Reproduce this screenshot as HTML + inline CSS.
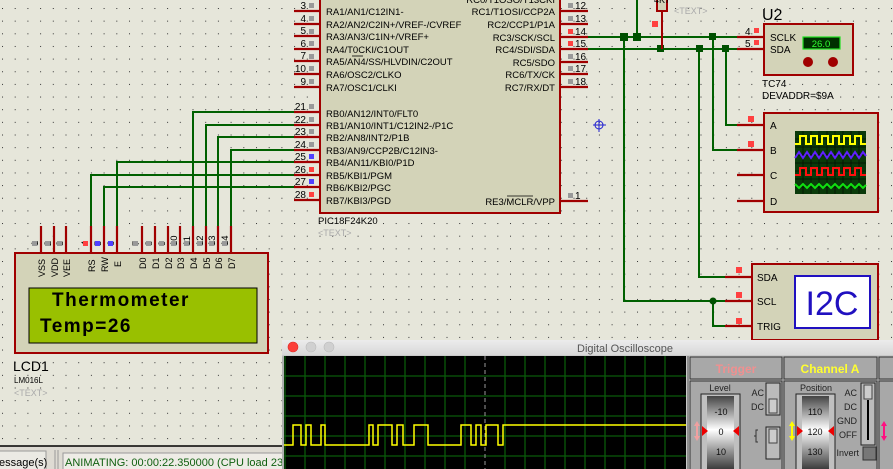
<!DOCTYPE html>
<html><head><meta charset="utf-8"><style>
html,body{margin:0;padding:0;width:893px;height:469px;overflow:hidden;background:#e6e6da}
svg{display:block}
text{font-family:"Liberation Sans",sans-serif}
</style></head><body>
<svg width="893" height="469" viewBox="0 0 893 469" xmlns="http://www.w3.org/2000/svg">
<defs>
<pattern id="dots" x="2" y="8" width="12.7" height="12.65" patternUnits="userSpaceOnUse"><rect x="0" y="0" width="1" height="1" fill="#333"/></pattern>
<linearGradient id="knob" x1="0" x2="0" y1="0" y2="1"><stop offset="0" stop-color="#444"/><stop offset="0.45" stop-color="#fff"/><stop offset="1" stop-color="#333"/></linearGradient>
<linearGradient id="title" x1="0" x2="0" y1="0" y2="1"><stop offset="0" stop-color="#ececec"/><stop offset="1" stop-color="#d6d6d6"/></linearGradient>
</defs>
<rect width="893" height="469" fill="#e6e6da"/>
<rect width="893" height="469" fill="url(#dots)"/>

<!-- PIC chip -->
<rect x="320" y="-5" width="240" height="218" fill="#d3d3b8" stroke="#a00000" stroke-width="2"/>
<g stroke="#a00000" stroke-width="2.2">
<line x1="294" y1="11" x2="320" y2="11"/><line x1="294" y1="24" x2="320" y2="24"/><line x1="294" y1="36" x2="320" y2="36"/><line x1="294" y1="49" x2="320" y2="49"/><line x1="294" y1="61" x2="320" y2="61"/><line x1="294" y1="74" x2="320" y2="74"/><line x1="294" y1="87" x2="320" y2="87"/>
<line x1="294" y1="112" x2="320" y2="112"/><line x1="294" y1="125" x2="320" y2="125"/><line x1="294" y1="137" x2="320" y2="137"/><line x1="294" y1="150" x2="320" y2="150"/><line x1="294" y1="162" x2="320" y2="162"/><line x1="294" y1="175" x2="320" y2="175"/><line x1="294" y1="187" x2="320" y2="187"/><line x1="294" y1="200" x2="320" y2="200"/>
<line x1="561" y1="11" x2="588" y2="11"/><line x1="561" y1="24" x2="588" y2="24"/><line x1="561" y1="37" x2="588" y2="37"/><line x1="561" y1="49" x2="588" y2="49"/><line x1="561" y1="62" x2="588" y2="62"/><line x1="561" y1="74" x2="588" y2="74"/><line x1="561" y1="87" x2="588" y2="87"/><line x1="561" y1="201" x2="588" y2="201"/>
</g>
<g font-size="10" fill="#000" text-anchor="end">
<text x="306" y="9">3</text><text x="306" y="22">4</text><text x="306" y="34">5</text><text x="306" y="47">6</text><text x="306" y="59">7</text><text x="306" y="72">10</text><text x="306" y="85">9</text>
<text x="306" y="110">21</text><text x="306" y="123">22</text><text x="306" y="135">23</text><text x="306" y="148">24</text><text x="306" y="160">25</text><text x="306" y="173">26</text><text x="306" y="185">27</text><text x="306" y="198">28</text>
</g>
<g fill="#999">
<rect x="309" y="3" width="5" height="5"/><rect x="309" y="16" width="5" height="5"/><rect x="309" y="29" width="5" height="5"/><rect x="309" y="41" width="5" height="5"/><rect x="309" y="54" width="5" height="5"/><rect x="309" y="66" width="5" height="5"/><rect x="309" y="79" width="5" height="5"/>
<rect x="309" y="104" width="5" height="5"/><rect x="309" y="117" width="5" height="5"/><rect x="309" y="129" width="5" height="5"/><rect x="309" y="142" width="5" height="5"/>
<rect x="568" y="3" width="5" height="5"/><rect x="568" y="16" width="5" height="5"/><rect x="568" y="54" width="5" height="5"/><rect x="568" y="66" width="5" height="5"/><rect x="568" y="79" width="5" height="5"/><rect x="568" y="193" width="5" height="5"/>
</g>
<rect x="309" y="154" width="5" height="5" fill="#5040ff"/><rect x="309" y="179" width="5" height="5" fill="#5040ff"/>
<rect x="309" y="167" width="5" height="5" fill="#ff4040"/><rect x="309" y="192" width="5" height="5" fill="#ff4040"/>
<rect x="568" y="29" width="5" height="5" fill="#ff4040"/><rect x="568" y="41" width="5" height="5" fill="#ff4040"/>
<g font-size="10" fill="#000" text-anchor="start">
<text x="575" y="9">12</text><text x="575" y="22">13</text><text x="575" y="35">14</text><text x="575" y="47">15</text><text x="575" y="60">16</text><text x="575" y="72">17</text><text x="575" y="85">18</text><text x="575" y="199">1</text>
</g>
<g font-size="9.5" fill="#000">
<text x="326" y="15">RA1/AN1/C12IN1-</text><text x="326" y="28">RA2/AN2/C2IN+/VREF-/CVREF</text><text x="326" y="40">RA3/AN3/C1IN+/VREF+</text><text x="326" y="53">RA4/T0CKI/C1OUT</text><text x="326" y="65">RA5/AN4/SS/HLVDIN/C2OUT</text><text x="326" y="78">RA6/OSC2/CLKO</text><text x="326" y="91">RA7/OSC1/CLKI</text>
<text x="326" y="117">RB0/AN12/INT0/FLT0</text><text x="326" y="129">RB1/AN10/INT1/C12IN2-/P1C</text><text x="326" y="141">RB2/AN8/INT2/P1B</text><text x="326" y="154">RB3/AN9/CCP2B/C12IN3-</text><text x="326" y="166">RB4/AN11/KBI0/P1D</text><text x="326" y="179">RB5/KBI1/PGM</text><text x="326" y="191">RB6/KBI2/PGC</text><text x="326" y="204">RB7/KBI3/PGD</text>
</g>
<line x1="352" y1="56" x2="363" y2="56" stroke="#000" stroke-width="0.8"/>
<g font-size="9.5" fill="#000" text-anchor="end">
<text x="555" y="3">RC0/T1OSO/T13CKI</text><text x="555" y="15">RC1/T1OSI/CCP2A</text><text x="555" y="28">RC2/CCP1/P1A</text><text x="555" y="41">RC3/SCK/SCL</text><text x="555" y="53">RC4/SDI/SDA</text><text x="555" y="66">RC5/SDO</text><text x="555" y="78">RC6/TX/CK</text><text x="555" y="91">RC7/RX/DT</text><text x="555" y="205">RE3/MCLR/VPP</text>
</g>
<line x1="507" y1="196" x2="533" y2="196" stroke="#000" stroke-width="0.8"/>
<text x="318" y="224" font-size="9.5">PIC18F24K20</text>
<text x="318" y="236" font-size="9" fill="#aaa">&lt;TEXT&gt;</text>

<g stroke="#006000" stroke-width="2" fill="none">
<polyline points="294,112 193,112 193,226"/>
<polyline points="294,125 206,125 206,226"/>
<polyline points="294,137 218,137 218,226"/>
<polyline points="294,150 231,150 231,226"/>
<polyline points="294,162 117,162 117,226"/>
<polyline points="294,175 91,175 91,226"/>
<polyline points="294,187 104,187 104,226"/>
</g>

<g stroke="#a00000" stroke-width="2.2">
<line x1="41" y1="226" x2="41" y2="252"/><line x1="54" y1="226" x2="54" y2="252"/><line x1="66" y1="226" x2="66" y2="252"/><line x1="91" y1="226" x2="91" y2="252"/><line x1="104" y1="226" x2="104" y2="252"/><line x1="117" y1="226" x2="117" y2="252"/><line x1="142" y1="226" x2="142" y2="252"/><line x1="155" y1="226" x2="155" y2="252"/><line x1="168" y1="226" x2="168" y2="252"/><line x1="180" y1="226" x2="180" y2="252"/><line x1="193" y1="226" x2="193" y2="252"/><line x1="206" y1="226" x2="206" y2="252"/><line x1="218" y1="226" x2="218" y2="252"/><line x1="231" y1="226" x2="231" y2="252"/>
</g>
<g font-size="9.5" fill="#000">
<text transform="translate(38,246) rotate(-90)">1</text><text transform="translate(51,246) rotate(-90)">2</text><text transform="translate(63,246) rotate(-90)">3</text><text transform="translate(88,246) rotate(-90)">4</text><text transform="translate(101,246) rotate(-90)">5</text><text transform="translate(114,246) rotate(-90)">6</text><text transform="translate(139,246) rotate(-90)">7</text><text transform="translate(152,246) rotate(-90)">8</text><text transform="translate(165,246) rotate(-90)">9</text><text transform="translate(177,246) rotate(-90)">10</text><text transform="translate(190,246) rotate(-90)">11</text><text transform="translate(203,246) rotate(-90)">12</text><text transform="translate(215,246) rotate(-90)">13</text><text transform="translate(228,246) rotate(-90)">14</text>
</g>
<g fill="#999"><rect x="32" y="241" width="5" height="5"/><rect x="45" y="241" width="5" height="5"/><rect x="57" y="241" width="5" height="5"/><rect x="133" y="241" width="5" height="5"/><rect x="146" y="241" width="5" height="5"/><rect x="159" y="241" width="5" height="5"/><rect x="171" y="241" width="5" height="5"/><rect x="184" y="241" width="5" height="5"/><rect x="197" y="241" width="5" height="5"/><rect x="209" y="241" width="5" height="5"/><rect x="222" y="241" width="5" height="5"/></g>
<rect x="83" y="241" width="5" height="5" fill="#ff4040"/><rect x="95" y="241" width="5" height="5" fill="#5040ff"/><rect x="108" y="241" width="5" height="5" fill="#5040ff"/>
<rect x="15" y="253" width="253" height="100" fill="#d3d3b8" stroke="#a00000" stroke-width="2"/>
<g font-size="9" fill="#000">
<text transform="translate(45,277) rotate(-90)">VSS</text><text transform="translate(58,277) rotate(-90)">VDD</text><text transform="translate(70,277) rotate(-90)">VEE</text><text transform="translate(95,272) rotate(-90)">RS</text><text transform="translate(108,272) rotate(-90)">RW</text><text transform="translate(121,267) rotate(-90)">E</text><text transform="translate(146,269) rotate(-90)">D0</text><text transform="translate(159,269) rotate(-90)">D1</text><text transform="translate(172,269) rotate(-90)">D2</text><text transform="translate(184,269) rotate(-90)">D3</text><text transform="translate(197,269) rotate(-90)">D4</text><text transform="translate(210,269) rotate(-90)">D5</text><text transform="translate(222,269) rotate(-90)">D6</text><text transform="translate(235,269) rotate(-90)">D7</text>
</g>
<rect x="29" y="288" width="228" height="55" fill="#99c000" stroke="#000" stroke-width="1"/>
<text x="52" y="306" font-family="Liberation Mono" font-size="19" font-weight="bold" fill="#000" letter-spacing="1.5">Thermometer</text>
<text x="40" y="332" font-family="Liberation Mono" font-size="19" font-weight="bold" fill="#000" letter-spacing="1.5">Temp=26</text>
<text x="13" y="371" font-size="14" fill="#000">LCD1</text>
<text x="14" y="383" font-size="8" fill="#000">LM016L</text>
<text x="14" y="396" font-size="9" fill="#aaa">&lt;TEXT&gt;</text>

<g stroke="#006000" stroke-width="2" fill="none">
<line x1="588" y1="37" x2="737" y2="37"/>
<line x1="588" y1="49" x2="737" y2="49"/>
<line x1="637" y1="0" x2="637" y2="37"/>
<polyline points="624,37 624,301 725,301"/>
<polyline points="699,49 699,277 725,277"/>
<polyline points="713,301 713,326 725,326"/>
<polyline points="713,37 713,150 737,150"/>
<polyline points="726,49 726,125 737,125"/>
</g>
<g fill="#005000">
<rect x="620" y="33" width="8" height="8"/><rect x="633" y="33" width="8" height="8"/><rect x="709" y="33" width="7" height="7"/><rect x="657" y="45" width="7" height="7"/><rect x="696" y="45" width="7" height="7"/><rect x="722" y="45" width="7" height="7"/><circle cx="713" cy="301" r="3.5"/>
</g>
<rect x="657" y="-2" width="10" height="13" fill="#d3d3b8" stroke="#a00000" stroke-width="2"/>
<line x1="662" y1="11" x2="662" y2="49" stroke="#a00000" stroke-width="2"/>
<rect x="652" y="21" width="6" height="6" fill="#ff4040"/>
<text x="674" y="14" font-size="9" fill="#aaa">&lt;TEXT&gt;</text>
<text x="654" y="3" font-size="9" fill="#000">4K7</text>

<g stroke="#a00000" stroke-width="2.2">
<line x1="737" y1="37" x2="763" y2="37"/><line x1="737" y1="49" x2="763" y2="49"/>
<line x1="737" y1="125" x2="763" y2="125"/><line x1="737" y1="150" x2="763" y2="150"/><line x1="737" y1="175" x2="763" y2="175"/><line x1="737" y1="201" x2="763" y2="201"/>
<line x1="725" y1="277" x2="751" y2="277"/><line x1="725" y1="301" x2="751" y2="301"/><line x1="725" y1="326" x2="751" y2="326"/>
</g>
<text x="762" y="20" font-size="16" fill="#000">U2</text>
<rect x="764" y="24" width="89" height="51" fill="#d3d3b8" stroke="#a00000" stroke-width="2"/>
<text x="745" y="35" font-size="10">4</text><text x="745" y="47" font-size="10">5</text>
<rect x="754" y="28" width="5" height="5" fill="#ff4040"/><rect x="754" y="40" width="5" height="5" fill="#ff4040"/>
<text x="770" y="41" font-size="10">SCLK</text><text x="770" y="53" font-size="10">SDA</text>
<rect x="803" y="37" width="37" height="12" fill="#003000" stroke="#20e020" stroke-width="1.2"/>
<text x="821" y="47" font-size="9.5" fill="#30ff30" text-anchor="middle">26.0</text>
<circle cx="808" cy="62" r="5" fill="#a00000"/><circle cx="833" cy="62" r="5" fill="#a00000"/>
<text x="762" y="87" font-size="10">TC74</text>
<text x="762" y="99" font-size="10">DEVADDR=$9A</text>
<rect x="764" y="113" width="114" height="99" fill="#d3d3b8" stroke="#a00000" stroke-width="2"/>
<rect x="748" y="116" width="6" height="6" fill="#ff4040"/><rect x="748" y="141" width="6" height="6" fill="#ff4040"/>
<text x="770" y="129" font-size="10">A</text><text x="770" y="154" font-size="10">B</text><text x="770" y="179" font-size="10">C</text><text x="770" y="205" font-size="10">D</text>
<rect x="795" y="131" width="71" height="63" fill="#0a3a0a"/>
<g stroke="#000" stroke-width="0.8" opacity="0.7">
<line x1="803" y1="131" x2="803" y2="194"/><line x1="811" y1="131" x2="811" y2="194"/><line x1="819" y1="131" x2="819" y2="194"/><line x1="827" y1="131" x2="827" y2="194"/><line x1="835" y1="131" x2="835" y2="194"/><line x1="843" y1="131" x2="843" y2="194"/><line x1="851" y1="131" x2="851" y2="194"/><line x1="859" y1="131" x2="859" y2="194"/>
<line x1="795" y1="139" x2="866" y2="139"/><line x1="795" y1="147" x2="866" y2="147"/><line x1="795" y1="155" x2="866" y2="155"/><line x1="795" y1="163" x2="866" y2="163"/><line x1="795" y1="171" x2="866" y2="171"/><line x1="795" y1="179" x2="866" y2="179"/><line x1="795" y1="187" x2="866" y2="187"/>
</g>
<polyline fill="none" stroke="#ffff00" stroke-width="2" points="795,144 800,144 800,136 806,136 806,144 811,144 811,136 817,136 817,144 822,144 822,136 828,136 828,144 833,144 833,136 839,136 839,144 844,144 844,136 850,136 850,144 855,144 855,136 861,136 861,144 866,144"/>
<polyline fill="none" stroke="#6020ff" stroke-width="2" points="795,158 799,152 803,158 807,152 811,158 815,152 819,158 823,152 827,158 831,152 835,158 839,152 843,158 847,152 851,158 855,152 859,158 863,152 866,156"/>
<polyline fill="none" stroke="#ff1010" stroke-width="2" points="795,175 800,175 800,168 806,168 806,175 811,175 811,168 817,168 817,175 822,175 822,168 828,168 828,175 833,175 833,168 839,168 839,175 844,175 844,168 850,168 850,175 855,175 855,168 861,168 861,175 866,175"/>
<polyline fill="none" stroke="#10e010" stroke-width="2" points="795,184 799,188 803,184 807,188 811,184 815,188 819,184 823,188 827,184 831,188 835,184 839,188 843,184 847,188 851,184 855,188 859,184 863,188 866,185"/>

<rect x="752" y="264" width="126" height="76" fill="#d3d3b8" stroke="#a00000" stroke-width="2"/>
<rect x="736" y="267" width="6" height="6" fill="#ff4040"/><rect x="736" y="292" width="6" height="6" fill="#ff4040"/><rect x="736" y="318" width="6" height="6" fill="#ff4040"/>
<text x="757" y="281" font-size="10">SDA</text><text x="757" y="305" font-size="10">SCL</text><text x="757" y="330" font-size="10">TRIG</text>
<rect x="795" y="276" width="75" height="52" fill="#fff" stroke="#2010c0" stroke-width="2"/>
<text x="832" y="315" font-size="34" fill="#2010c0" text-anchor="middle" font-family="Liberation Mono">I2C</text>

<g stroke="#2020d0" stroke-width="1" fill="none"><circle cx="599" cy="125" r="4"/><line x1="593" y1="125" x2="606" y2="125"/><line x1="599" y1="119" x2="599" y2="132"/></g>

<rect x="0" y="446" width="284" height="23" fill="#dedbd3"/>
<line x1="0" y1="446" x2="284" y2="446" stroke="#000" stroke-width="1.5"/>
<rect x="-2" y="451" width="48" height="20" fill="#ebeae4" stroke="#999"/>
<text x="-1" y="466" font-size="11">essage(s)</text>
<line x1="55" y1="450" x2="55" y2="469" stroke="#999"/><line x1="58" y1="450" x2="58" y2="469" stroke="#999"/>
<rect x="63" y="453" width="225" height="18" fill="#eeece6" stroke="#999"/>
<text x="65" y="466" font-size="11" fill="#106010">ANIMATING: 00:00:22.350000 (CPU load 23%</text>

<rect x="282" y="340" width="611" height="129" fill="#b0b0b0"/>
<rect x="282" y="340" width="611" height="16" fill="url(#title)"/>
<line x1="282" y1="356" x2="893" y2="356" stroke="#bbb"/>
<circle cx="293" cy="347" r="5" fill="#fc3e3a" stroke="#de2a26" stroke-width="0.6"/>
<circle cx="311" cy="347" r="5" fill="#d0d0d0" stroke="#bbb" stroke-width="0.6"/>
<circle cx="329" cy="347" r="5" fill="#d0d0d0" stroke="#bbb" stroke-width="0.6"/>
<text x="625" y="352" font-size="11" fill="#555" text-anchor="middle">Digital Oscilloscope</text>
<rect x="284" y="356" width="402" height="113" fill="#000"/>
<g stroke="#0a5a0a" stroke-width="1.3">
<line x1="285" y1="356" x2="285" y2="469"/><line x1="305" y1="356" x2="305" y2="469"/><line x1="325" y1="356" x2="325" y2="469"/><line x1="345" y1="356" x2="345" y2="469"/><line x1="365" y1="356" x2="365" y2="469"/><line x1="385" y1="356" x2="385" y2="469"/><line x1="405" y1="356" x2="405" y2="469"/><line x1="425" y1="356" x2="425" y2="469"/><line x1="445" y1="356" x2="445" y2="469"/><line x1="465" y1="356" x2="465" y2="469"/><line x1="505" y1="356" x2="505" y2="469"/><line x1="525" y1="356" x2="525" y2="469"/><line x1="545" y1="356" x2="545" y2="469"/><line x1="565" y1="356" x2="565" y2="469"/><line x1="585" y1="356" x2="585" y2="469"/><line x1="605" y1="356" x2="605" y2="469"/><line x1="625" y1="356" x2="625" y2="469"/><line x1="645" y1="356" x2="645" y2="469"/><line x1="665" y1="356" x2="665" y2="469"/>
<line x1="284" y1="376" x2="686" y2="376"/><line x1="284" y1="396" x2="686" y2="396"/><line x1="284" y1="416" x2="686" y2="416"/><line x1="284" y1="436" x2="686" y2="436"/><line x1="284" y1="456" x2="686" y2="456"/>
</g>
<line x1="485" y1="356" x2="485" y2="469" stroke="#999" stroke-width="1" stroke-dasharray="4,3"/>
<polyline fill="none" stroke="#ffff00" stroke-width="1.5" points="284,445 293,445 293,425 301,425 301,445 306,445 306,425 311,425 311,445 321,445 321,425 325,425 325,445 369,445 369,425 373,425 373,445 378,445 378,425 392,425 392,445 397,445 397,425 403,425 403,445 414,445 414,425 428,425 428,445 461,445 461,425 471,425 471,445 476,445 476,425 481,425 481,445 486,445 486,425 498,425 498,445 503,445 503,425 686,425"/>
<rect x="686" y="356" width="4" height="113" fill="#c8c8c8"/>
<line x1="688" y1="356" x2="688" y2="469" stroke="#555"/>
<g fill="#a8a8a8" stroke="#333" stroke-width="1">
<rect x="690" y="357" width="92" height="22"/><rect x="784" y="357" width="93" height="22"/><rect x="879" y="357" width="16" height="22"/>
<rect x="690" y="381" width="92" height="90"/><rect x="784" y="381" width="93" height="90"/><rect x="879" y="381" width="16" height="90"/>
</g>
<text x="736" y="373" font-size="12" font-weight="bold" fill="#f09090" text-anchor="middle">Trigger</text>
<text x="830" y="373" font-size="12" font-weight="bold" fill="#ffff30" text-anchor="middle">Channel A</text>
<text x="720" y="391" font-size="9" fill="#222" text-anchor="middle">Level</text>
<text x="816" y="391" font-size="9" fill="#222" text-anchor="middle">Position</text>
<rect x="701" y="394" width="39" height="78" fill="#c0c0c0" stroke="#222"/>
<rect x="707" y="396" width="27" height="75" fill="url(#knob)"/>
<rect x="796" y="394" width="39" height="78" fill="#c0c0c0" stroke="#222"/>
<rect x="802" y="396" width="27" height="75" fill="url(#knob)"/>
<g font-size="9" fill="#111" text-anchor="middle">
<text x="721" y="415">-10</text><text x="721" y="435">0</text><text x="721" y="455">10</text>
<text x="815" y="415">110</text><text x="815" y="435">120</text><text x="815" y="455">130</text>
</g>
<g fill="#e00">
<polygon points="702,426 708,431 702,436"/><polygon points="739,426 733,431 739,436"/>
<polygon points="797,426 803,431 797,436"/><polygon points="834,426 828,431 834,436"/>
</g>
<polygon points="697,421 694,426 696,426 696,436 694,436 697,441 700,436 698,436 698,426 700,426" fill="#f0a0a0"/>
<polygon points="792,421 789,426 791,426 791,436 789,436 792,441 795,436 793,436 793,426 795,426" fill="#ffff00"/>
<polygon points="884,421 881,426 883,426 883,436 881,436 884,441 887,436 885,436 885,426 887,426" fill="#ff1080"/>
<g font-size="9" fill="#222" text-anchor="end">
<text x="764" y="396">AC</text><text x="764" y="410">DC</text>
<text x="857" y="396">AC</text><text x="857" y="410">DC</text><text x="857" y="424">GND</text><text x="857" y="438">OFF</text><text x="859" y="456">Invert</text>
</g>
<rect x="766" y="383" width="14" height="32" fill="#bbb" stroke="#222"/>
<rect x="769" y="399" width="8" height="14" fill="#ccc" stroke="#444"/>
<rect x="766" y="427" width="14" height="32" fill="#bbb" stroke="#222"/>
<rect x="769" y="429" width="8" height="14" fill="#ccc" stroke="#444"/>
<rect x="861" y="383" width="14" height="62" fill="#bbb" stroke="#222"/>
<rect x="864" y="385" width="8" height="14" fill="#ccc" stroke="#444"/>
<line x1="868" y1="400" x2="868" y2="440" stroke="#000" stroke-width="2"/>
<rect x="863" y="447" width="13" height="13" fill="#777" stroke="#333"/>
<path d="M758,430 h-2 v6 h-2 M756,436 v6 h2" stroke="#333" fill="none"/>
</svg>
</body></html>
